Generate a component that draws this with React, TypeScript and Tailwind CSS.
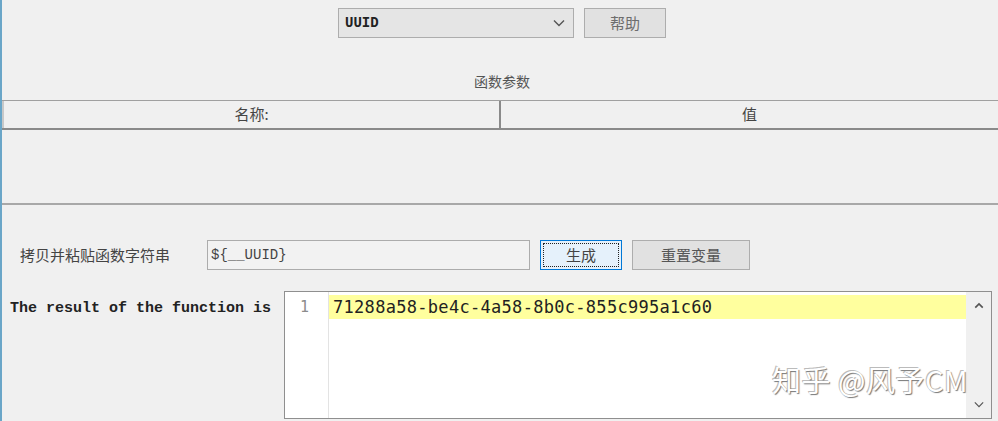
import React from "react";

const cjk = "font-['Noto_Sans_CJK_SC',sans-serif]";

function ChevronDown({ className }: { className?: string }) {
  return (
    <svg viewBox="0 0 12 8" className={className} fill="none" stroke="currentColor" strokeWidth="1.4">
      <path d="M1 1.5 L6 6.5 L11 1.5" />
    </svg>
  );
}

function ChevronUp({ className }: { className?: string }) {
  return (
    <svg viewBox="0 0 12 8" className={className} fill="none" stroke="currentColor" strokeWidth="2">
      <path d="M1.5 6.5 L6 2 L10.5 6.5" />
    </svg>
  );
}

export default function App() {
  return (
    <div className="relative w-[998px] h-[421px] overflow-hidden bg-[#f0f0f0] border-l-2 border-[#6aa6c8] text-[#333]">
      {/* function selector */}
      <div className="flex justify-center gap-[10px] pt-[8px] pl-[4px]">
        <div className="flex h-[30px] w-[236px] items-center justify-between border border-[#adadad] bg-[#e5e5e5] pl-[6px] pr-[8px]">
          <span className="font-['Liberation_Mono',monospace] text-[14px] font-bold text-[#222]">UUID</span>
          <ChevronDown className="h-[8px] w-[12px] text-[#555]" />
        </div>
        <button className={`h-[30px] w-[82px] border border-[#adadad] bg-[#e1e1e1] text-[15px] text-[#6d6d6d] ${cjk}`}>
          帮助
        </button>
      </div>

      <div className={`mt-[33px] text-center text-[14px] leading-[20px] text-[#555] pl-[4px] ${cjk}`}>函数参数</div>

      {/* parameters table */}
      <div className="mt-[9px] border-t border-[#a0a0a0]">
        <div className={`flex h-[29px] border-b-2 border-[#8a8a8a] text-[15px] text-[#444] ${cjk}`}>
          <div className="flex w-[499px] items-center justify-center border-x-2 border-[#8a8a8a] border-l-[#c8c8c8]">名称:</div>
          <div className="flex flex-1 items-center justify-center">值</div>
        </div>
        <div className="h-[75px] border-b-2 border-[#a8a8a8]" />
      </div>

      {/* copy & paste row */}
      <div className="mt-[35px] flex items-center pl-[18px]">
        <span className={`w-[187px] text-[15px] text-[#444] ${cjk}`}>拷贝并粘贴函数字符串</span>
        <div className="flex h-[30px] w-[323px] items-center border border-[#acacac] bg-[#f2f2f2] px-[3px] font-['Liberation_Mono',monospace] text-[14px] text-[#444]">
          {"${__UUID}"}
        </div>
        <button className="ml-[10px] h-[30px] w-[82px] border border-[#0078d7] bg-[#e5f1fb] p-[2px]">
          <span className={`flex h-full w-full items-center justify-center border border-dotted border-[#222] text-[15px] text-[#444] ${cjk}`}>生成</span>
        </button>
        <button className={`ml-[10px] h-[30px] w-[118px] border border-[#adadad] bg-[#e1e1e1] text-[15px] text-[#555] ${cjk}`}>
          重置变量
        </button>
      </div>

      {/* result row */}
      <div className="mt-[21px] flex items-start pl-[8px]">
        <span className="mt-[8px] w-[274px] font-['Liberation_Mono',monospace] text-[15px] font-bold leading-[20px] text-[#222]">
          The result of the function is
        </span>
        <div className="flex h-[128px] w-[708px] border border-[#8f8f8f] bg-white">
          <div className="w-[44px] border-r border-[#e3e3e3] pt-[4px] pr-[19px] text-right font-['DejaVu_Sans_Mono',monospace] text-[15px] leading-[22px] text-[#8c8c8c]">
            1
          </div>
          <div className="flex-1 pt-[3px]">
            <div className="h-[24px] bg-[#ffff9e] pl-[4px] font-['DejaVu_Sans_Mono',monospace] text-[17px] leading-[24px] tracking-[0.3px] text-[#222]">
              71288a58-be4c-4a58-8b0c-855c995a1c60
            </div>
          </div>
          <div className="flex w-[25px] flex-col items-center justify-between bg-[#f0f0f0] py-[10px]">
            <ChevronUp className="h-[7px] w-[10px] text-[#555]" />
            <ChevronDown className="h-[7px] w-[10px] text-[#555]" />
          </div>
        </div>
      </div>

      {/* watermark */}
      <div
        className={`pointer-events-none absolute left-[770px] top-[361px] text-[29px] leading-[36px] tracking-[0.5px] text-white [text-shadow:1px_1px_1px_#777,-1px_-1px_0_#bbb] ${cjk}`}
      >
        知乎 @风予CM
      </div>
    </div>
  );
}
